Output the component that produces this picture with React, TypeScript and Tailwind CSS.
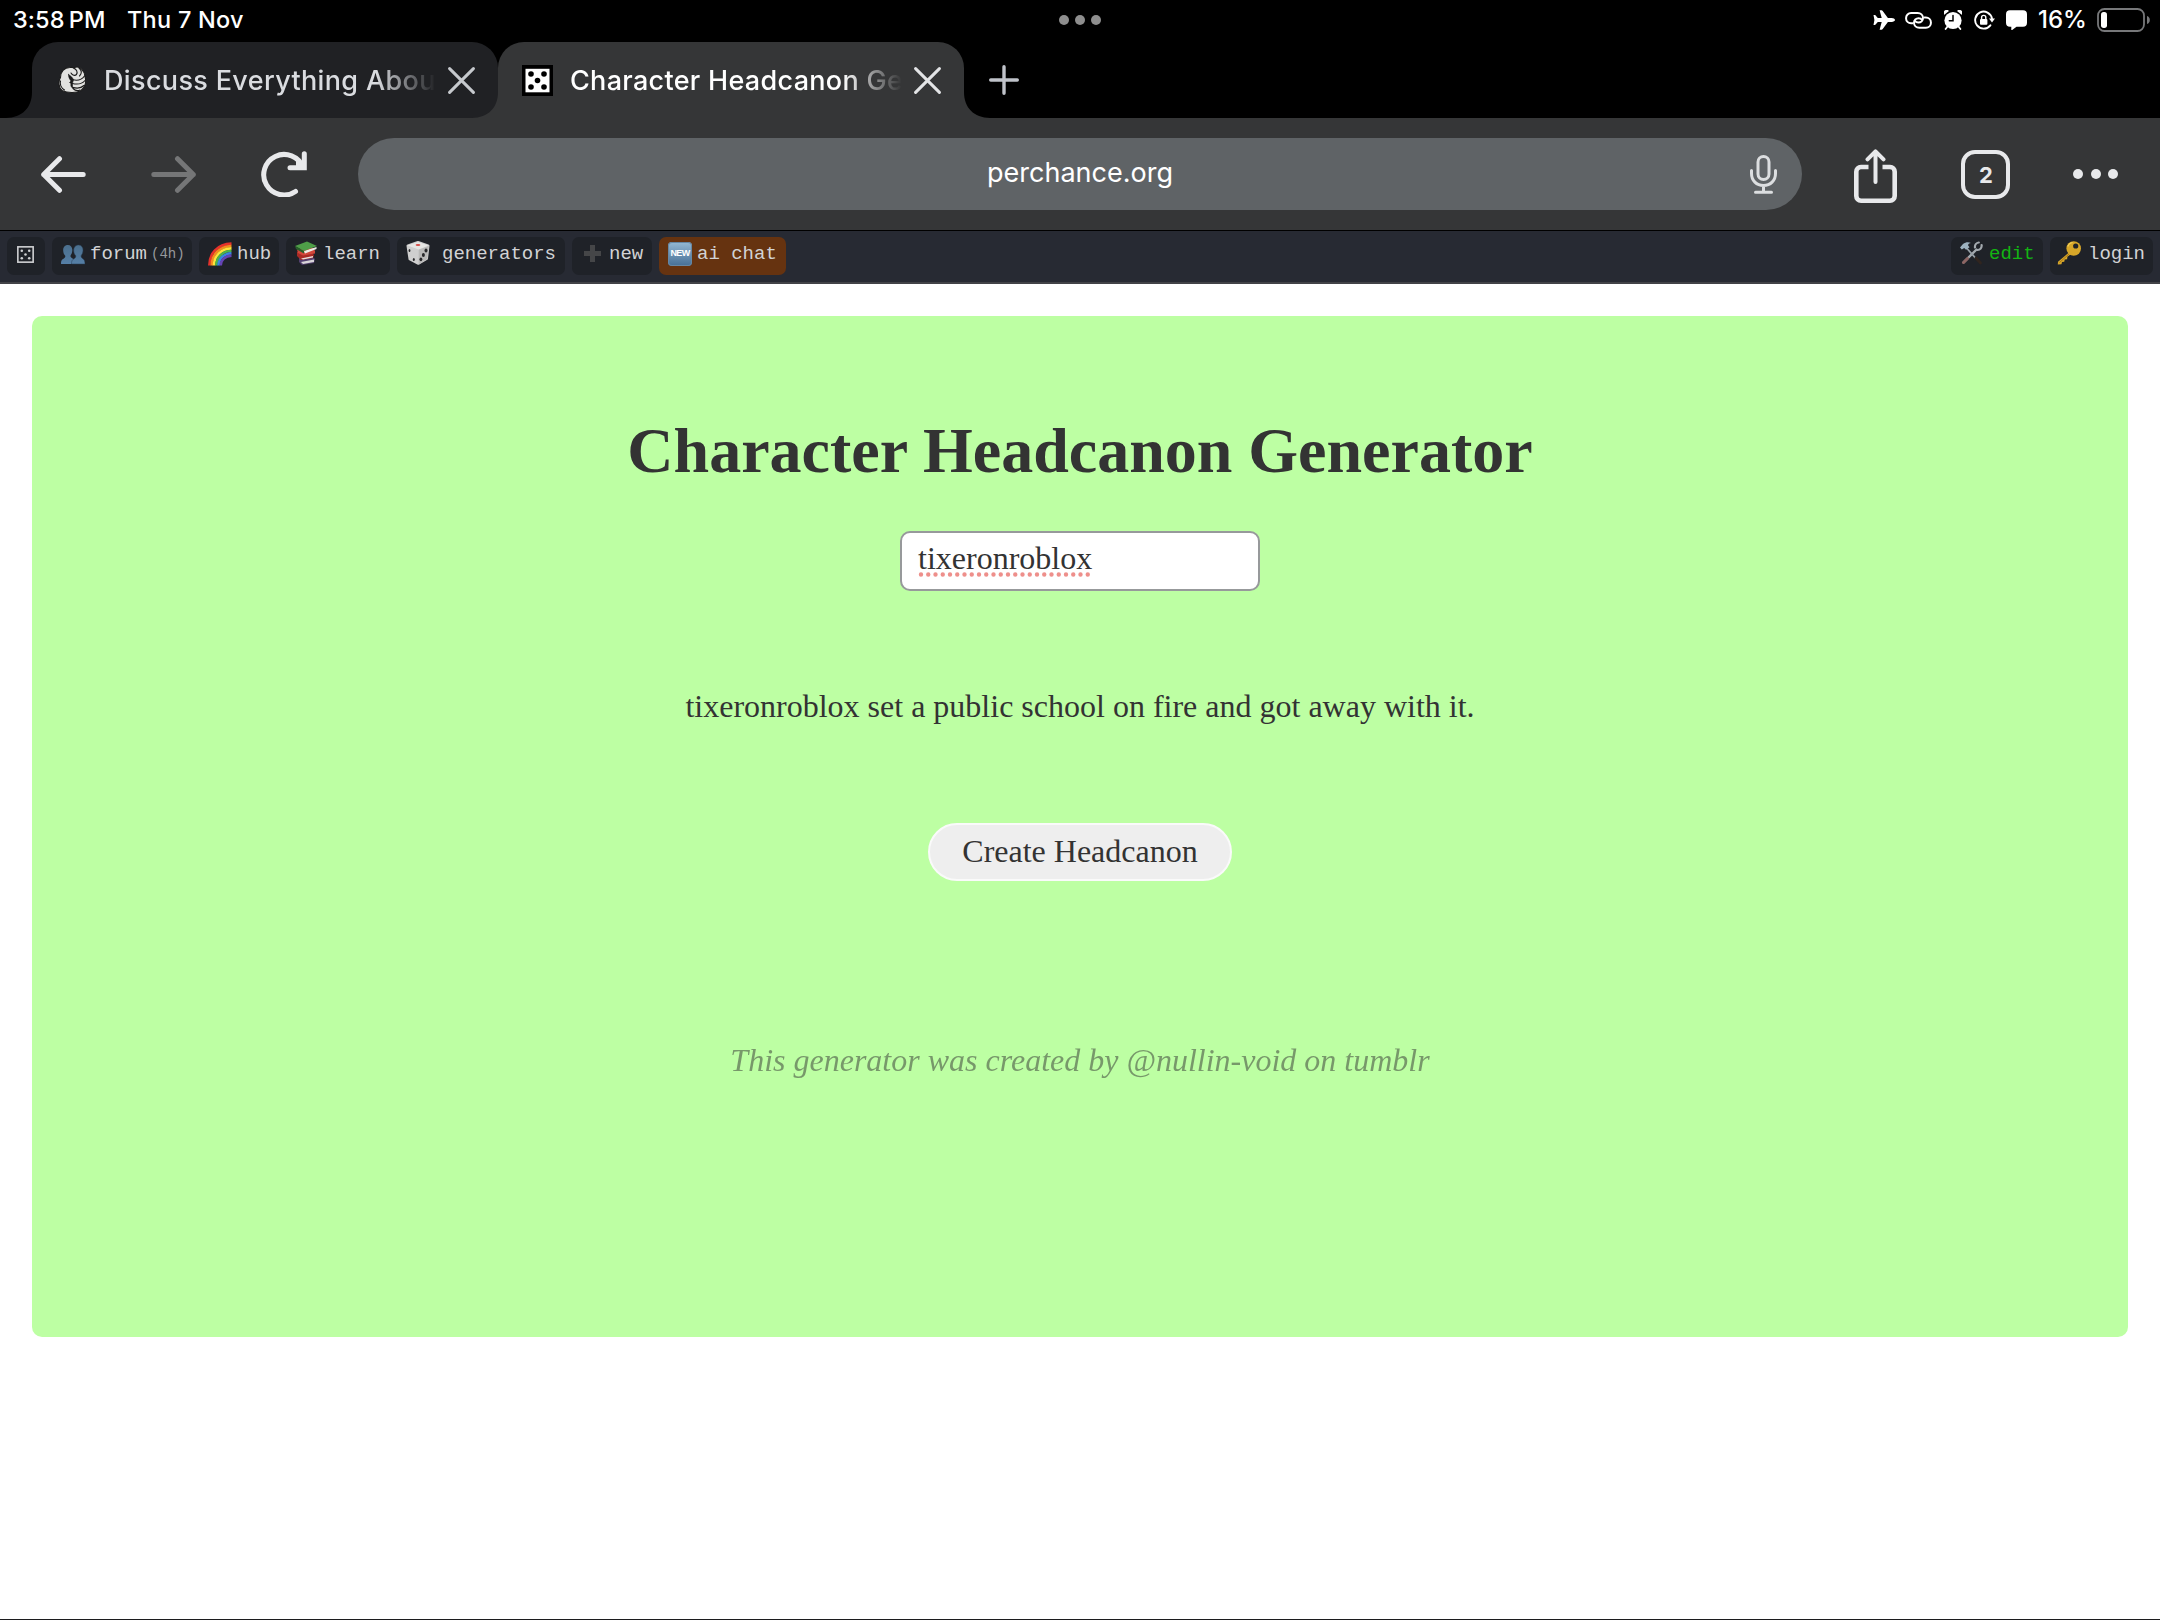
import type { ReactNode } from 'react';

interface NavItemProps {
  icon: ReactNode;
  label?: string;
  className: string;
}

const StatusIcons = () => (
  <div className="flex items-center">
    {/* airplane */}
    <svg className="w-[22px] h-5" viewBox="0 0 22 20" fill="#fff">
      <path d="M22 10c0 1.100-1.600 1.900-3.200 1.900h-3.900L9.700 19.100c-.3.500-.7.700-1.200.7H6.600L8.700 12H4.800l-2.200 2.600c-.2.300-.5.400-.9.400H.5L1.400 10 .5 5h1.200c.4 0 .7.100.9.400L4.800 8h3.900L6.600.2h1.900c.5 0 .9.200 1.200.7l5.200 7.200h3.900c1.600 0 3.200.8 3.200 1.900z" />
    </svg>
    {/* hotspot link */}
    <svg className="ml-[10px] w-[27px] h-[17px]" viewBox="0 0 27 17" fill="none" stroke="#fff" strokeWidth="2" strokeLinecap="round">
      <path d="M7.500 11.200H6.100a5.050 5.050 0 0 1 0-10.100h6.500c3.200 0 5.400 2 5.400 4.900 0 2.700-2 4.600-4.600 4.600-1.500 0-2.700-.6-3.300-1.600" />
      <path d="M19.500 5.600h1.400a5.050 5.050 0 0 1 0 10.100h-6.500c-3.200 0-5.400-2-5.400-4.900 0-2.700 2-4.600 4.600-4.600 1.500 0 2.700.6 3.300 1.600" />
    </svg>
    {/* alarm */}
    <svg className="ml-3 w-[18px] h-5" viewBox="0 0 18 20">
      <path d="M.3 4.800A3 3 0 0 1 5 1zM17.700 4.800A3 3 0 0 0 13 1z" fill="#fff" />
      <path d="M3.500 16.500L1.600 19M14.500 16.500l1.900 2.500" stroke="#fff" strokeWidth="1.800" strokeLinecap="round" />
      <circle cx="9" cy="10.500" r="8.600" fill="#fff" />
      <path d="M9 5.500v5.300H5.300" fill="none" stroke="#000" strokeWidth="1.500" strokeLinecap="round" />
    </svg>
    {/* rotation lock */}
    <svg className="ml-3 w-[21px] h-5" viewBox="0 0 21 20" fill="none">
      <path d="M18 8.500A8.500 8.500 0 1 0 16.400 15.300" stroke="#fff" strokeWidth="1.900" strokeLinecap="round" />
      <path d="M15 8.400h6l-3 4z" fill="#fff" />
      <rect x="6" y="9" width="7.400" height="5.800" rx="1" fill="#fff" />
      <path d="M7.600 9V7.500a2.100 2.100 0 0 1 4.200 0V9" stroke="#fff" strokeWidth="1.400" />
    </svg>
    {/* message */}
    <svg className="ml-[11px] w-[21px] h-5" viewBox="0 0 21 20" fill="#fff">
      <path d="M4 .3h13a4 4 0 0 1 4 4v8.400a4 4 0 0 1-4 4h-6.500L6.200 19.900c-.5.3-.9.1-.9-.5v-2.700H4a4 4 0 0 1-4-4V4.300a4 4 0 0 1 4-4z" />
    </svg>
    <span className="ml-[11px] w-[51px] text-[24px] font-medium whitespace-nowrap">16%</span>
    <svg className="ml-2 w-[53px] h-6" viewBox="0 0 53 24" fill="none">
      <rect x="1" y="1" width="46" height="22" rx="6.500" stroke="#77787a" strokeWidth="1.800" />
      <rect x="4" y="4" width="6" height="16" rx="2.700" fill="#fff" />
      <path d="M50 8c1.800.6 2.800 2 2.800 4s-1 3.400-2.800 4z" fill="#77787a" />
    </svg>
  </div>
);

const TabFlare = ({ className }: { className: string }) => (
  <svg className={className} viewBox="0 0 26 26" fill="currentColor">
    <path d="M26 0v26H0C16 25.500 26 16 26 0z" />
  </svg>
);

const CloseIcon = () => (
  <svg className="w-[27px] h-[27px]" viewBox="0 0 27 27" fill="none" stroke="currentColor" strokeWidth="3" strokeLinecap="round">
    <path d="M1.600 1.600l23.800 23.800M25.400 1.600L1.600 25.400" />
  </svg>
);

const BrainIcon = () => (
  <svg className="w-7 h-7" viewBox="0 0 28 28" fill="none" stroke="#1b1b1b" strokeWidth="1.100" strokeLinecap="round">
    <path d="M12 1.500C6 1.500 2.500 6 2.500 11.500c-2.500 4-2 10 1.500 13 6 3 15 2.500 19 0 4.500-3 5.500-9 4-14C26.500 5 22-1 16 1.800 14.800 1.300 13.500 1.300 12 1.500z" fill="#e2e2e0" />
    <path d="M2.500 15c-1 3 .5 7 4 9" />
    <path d="M15.500 2c3 1.500 4.500 3.500 3 6.500-1.500 1.500-4 1-5.500-1.500M21 2c3 2.500 3 5.500.5 8M26.500 10c-2.500 3.500-6 5-11.500 3.800M27 14.500c-3 3.500-7 4.300-12.500 3M26 19.500c-3 2.800-7 3.300-11.500 1.800M15 22.500c2 2 5 2.500 7 1.500" />
    <path d="M10.500 8.500c2.500 1.500 4.500 3.500 5 5.500l-1 3v5c-1.500-1-2-2.500-1.500-4.500l-1.500-1 1.500-1.500c-1.500-2-2.500-3.500-2.500-6.500z" fill="#1b1b1b" strokeWidth=".6" />
  </svg>
);

const DiceFavicon = () => (
  <svg className="w-[31px] h-[31px]" viewBox="0 0 31 31">
    <rect width="31" height="31" fill="#000" />
    <rect x="3.500" y="3.800" width="24" height="23.500" fill="#fff" />
    <circle cx="9" cy="9" r="2.800" />
    <circle cx="22" cy="9" r="2.800" />
    <circle cx="15.500" cy="15.500" r="2.800" />
    <circle cx="9" cy="22" r="2.800" />
    <circle cx="22" cy="22" r="2.800" />
  </svg>
);

const StatusBar = () => (
  <div className="flex h-[42px] justify-between pl-[13px] pr-[10px] text-white">
    <div className="flex h-10 w-[700px] items-center text-[23.500px] font-medium">
      <span className="w-[114px] whitespace-nowrap tracking-[0.1px]">3:58&#8202;&#8202;PM</span>
      <span className="whitespace-nowrap tracking-[0.25px]">Thu 7 Nov</span>
    </div>
    <div className="flex h-10 items-center gap-[6px]">
      <span className="size-[10px] rounded-full bg-[#8e8e8e]" />
      <span className="size-[10px] rounded-full bg-[#8e8e8e]" />
      <span className="size-[10px] rounded-full bg-[#8e8e8e]" />
    </div>
    <div className="flex h-10 w-[703px] items-center justify-end">
      <StatusIcons />
    </div>
  </div>
);

const TabStrip = () => (
  <div className="flex h-[76px] pl-8">
    <div className="relative flex w-[466px] items-center rounded-t-[26px] bg-[#202124] pl-[26px] text-[#dadce0]">
      <TabFlare className="absolute bottom-0 left-[-26px] size-[26px] text-[#202124]" />
      <BrainIcon />
      <div className="ml-[18px] w-[332px] overflow-hidden pt-[3px] whitespace-nowrap text-[27px] font-[450] tracking-[0.35px] mask-[linear-gradient(to_right,#000_82%,transparent)]">
        Discuss Everything About
      </div>
      <div className="ml-3 text-[#c6c9cd]">
        <CloseIcon />
      </div>
    </div>
    <div className="relative flex w-[466px] items-center rounded-t-[26px] bg-[#353637] pl-6 text-white">
      <TabFlare className="absolute bottom-0 left-[-26px] size-[26px] text-[#353637]" />
      <TabFlare className="absolute right-[-26px] bottom-0 size-[26px] -scale-x-100 text-[#353637]" />
      <DiceFavicon />
      <div className="ml-[17px] w-[332px] overflow-hidden pt-[3px] whitespace-nowrap text-[27px] font-[450] tracking-[0.3px] mask-[linear-gradient(to_right,#000_82%,transparent)]">
        Character Headcanon Generator
      </div>
      <div className="ml-3 text-[#e3e4e6]">
        <CloseIcon />
      </div>
    </div>
    <div className="flex items-center pl-[25px]">
      <svg className="size-[30px]" viewBox="0 0 30 30" fill="none" stroke="#bfc2c9" strokeWidth="3.400" strokeLinecap="round">
        <path d="M15 1.700v26.600M1.700 15h26.600" />
      </svg>
    </div>
  </div>
);

const Toolbar = () => (
  <div className="flex h-[113px] items-center border-b border-black bg-[#353637] pl-[41px] text-[#e8e9eb]">
    <svg className="h-[37px] w-[45px]" viewBox="0 0 45 37" fill="none" stroke="currentColor" strokeWidth="5" strokeLinecap="round" strokeLinejoin="round">
      <path d="M18.500 2.700L2.700 18.500l15.800 15.800M2.700 18.500h39.500" />
    </svg>
    <svg className="ml-[65px] h-[37px] w-[45px]" viewBox="0 0 45 37" fill="none" stroke="#757677" strokeWidth="5" strokeLinecap="round" strokeLinejoin="round">
      <path d="M26.500 2.700l15.800 15.800-15.800 15.800M42.300 18.500H2.800" />
    </svg>
    <svg className="ml-[65px] size-[46px]" viewBox="0 0 46 46" fill="none" stroke="currentColor" strokeWidth="5" strokeLinecap="round">
      <path d="M34.500 40.500A20.300 20.300 0 1 1 42 16.500" />
      <path d="M43.300 2.700v14H29" />
      <path d="M35 8l9 9h-9z" fill="currentColor" stroke="none" />
    </svg>
    <div className="ml-[51px] flex h-[72px] w-[1444px] items-center rounded-full bg-[#5f6366]">
      <div className="w-full pl-[52px] pb-[2px] text-center text-[27px] text-white">perchance.org</div>
      <svg className="mr-[25px] h-[39px] w-[27px] shrink-0" viewBox="0 0 27 39" fill="none" stroke="#dcdee0" strokeWidth="3" strokeLinecap="round">
        <rect x="8" y="1.500" width="11" height="23" rx="5.500" />
        <path d="M1.500 15.500v3c0 7 5 12 12 12s12-5 12-12v-3M13.500 31v6.300M5.500 37.300h16" />
      </svg>
    </div>
    <svg className="ml-[52px] mt-1 h-[54px] w-[43px]" viewBox="0 0 43 54" fill="none" stroke="currentColor" strokeWidth="4.600" strokeLinecap="round" strokeLinejoin="round">
      <path d="M14.500 18H7a4.700 4.700 0 0 0-4.700 4.700V47A4.700 4.700 0 0 0 7 51.700h29a4.700 4.700 0 0 0 4.700-4.700V22.700A4.700 4.700 0 0 0 36 18h-7.500" strokeLinecap="butt" />
      <path d="M21.500 33V3M13.500 10.300l8-8 8 8" strokeWidth="4" />
    </svg>
    <div className="ml-16 flex size-[49px] items-center justify-center rounded-[14px] border-[4.500px] border-current pl-px pt-[3px] text-[22px] font-bold">2</div>
    <div className="ml-[63px] flex gap-[7.500px]">
      <span className="size-[10px] rounded-full bg-current" />
      <span className="size-[10px] rounded-full bg-current" />
      <span className="size-[10px] rounded-full bg-current" />
    </div>
  </div>
);

const DieOutline = () => (
  <svg className="ml-[10px] w-[17px] h-[17px]" viewBox="0 0 16 16" fill="#d0d1d3">
    <rect x=".8" y=".8" width="14.400" height="14.400" fill="none" stroke="#d0d1d3" strokeWidth="1.500" />
    <circle cx="4.500" cy="4.500" r="1.200" />
    <circle cx="11.500" cy="4.500" r="1.200" />
    <circle cx="8" cy="8" r="1.200" />
    <circle cx="4.500" cy="11.500" r="1.200" />
    <circle cx="11.500" cy="11.500" r="1.200" />
  </svg>
);

const PeopleIcon = () => (
  <svg className="ml-[9px] size-6" viewBox="0 0 24 24">
    <defs>
      <linearGradient id="people" x1="0" y1="0" x2="0" y2="1">
        <stop offset="0" stopColor="#4b6f8d" />
        <stop offset="1" stopColor="#557fa6" />
      </linearGradient>
    </defs>
    <path d="M6.800 3c3 0 4.800 2.400 4.500 5.600-.1 2.300-.9 3.800-1.900 5.100-.3 2 2.300 2.500 3.800 3.700.9.900 1.300 2.600 1.300 4.600H0c0-2.300.4-3.900 1.600-4.700 1.300-.9 3-1.300 2.700-3.500C3.100 12.500 2.300 11 2.200 8.700 2 5.400 3.800 3 6.800 3z" fill="url(#people)" />
    <path d="M17.500 3c3 0 4.800 2.400 4.500 5.600-.1 2.300-.9 3.800-1.900 5.100-.3 2 1.300 2.500 2.600 3.700.9.900 1.300 2.600 1.300 4.600H10.500c0-2.300.4-3.900 1.600-4.700 1.300-.9 3-1.300 2.700-3.500-1.200-1.300-2-2.800-2.100-5.100C12.500 5.400 14.500 3 17.500 3z" fill="url(#people)" stroke="#263d52" strokeWidth=".5" />
  </svg>
);

const RainbowIcon = () => (
  <svg className="ml-[9px] mb-px size-6" viewBox="0 0 24 24" fill="none" strokeWidth="2.600">
    <path d="M1.300 23.500C1.300 12 9 2 23.500 1.600" stroke="#e5322b" />
    <path d="M3.700 23.500C3.700 13 11 4.400 23.500 4" stroke="#f58a1f" />
    <path d="M6 23.500C6 14 13 6.800 23.500 6.400" stroke="#fbe43a" />
    <path d="M8.300 23.500C8.300 15 15 9.200 23.500 8.800" stroke="#4db34a" />
    <path d="M10.500 23.500c0-7 5.500-11.900 13-12.300" stroke="#3a86e0" />
    <path d="M12.700 23.500c0-5.500 4.500-9.500 10.800-9.900" stroke="#6543b5" />
  </svg>
);

const BooksIcon = () => (
  <svg className="ml-[9px] mb-[3px] h-6 w-[22px]" viewBox="0 0 22 24">
    <path d="M4 17l12-2 4 3-1 4-12 2-3-3z" fill="#53406f" />
    <path d="M6 21l13-2.500V21L8 23z" fill="#d8d5d8" />
    <path d="M2 11l12-2 5 5-1 3-12 2-4-4z" fill="#a92a25" />
    <path d="M6 17.500l12-2.500v1.500L8 18.500z" fill="#e9e0dd" />
    <path d="M2 8.500l15-2 3 3v3L8 14.500 3 12z" fill="#d2463a" />
    <path d="M9 10l12.500-4v2L10 12.500z" fill="#ecebe6" />
    <path d="M0 5L12 .5 22 5 9 10z" fill="#4f9e48" />
    <path d="M0 5l9 5v2.500L1 8z" fill="#28602a" />
  </svg>
);

const GameDieIcon = () => (
  <svg className="ml-[9px] mb-[2px] h-6 w-6" viewBox="0 0 24 24">
    <path d="M2 4.800L12 1.500l10 3.300-1.500 12.700-8 4.800L4 18z" fill="#cfcfcf" stroke="#cfcfcf" strokeWidth="3" strokeLinejoin="round" />
    <path d="M1.500 4.600L12 1l10.500 3.600L12.700 8.500z" fill="#e6e6e4" />
    <path d="M12.700 8.800l10-3.800-1.500 13-8.500 5.200z" fill="#b9b9b8" />
    <ellipse cx="12" cy="3.900" rx="2.400" ry="1" fill="#d64b46" />
    <g fill="#29292b">
      <ellipse cx="3.500" cy="9.500" rx=".9" ry="1.500" />
      <ellipse cx="7.800" cy="18.600" rx="1" ry="1.500" />
      <ellipse cx="20" cy="9.500" rx="1.500" ry="1.900" />
      <ellipse cx="17.400" cy="14" rx="1.500" ry="1.900" />
      <ellipse cx="14.900" cy="18.300" rx="1.400" ry="1.900" />
    </g>
  </svg>
);

const PlusIcon = () => (
  <svg className="ml-[11px] mb-[2px] size-[19px]" viewBox="0 0 19 19" fill="#454648">
    <path d="M7 1h5v6h6v5h-6v6H7v-6H1V7h6z" />
  </svg>
);

const NewBadge = () => (
  <span className="ml-[9px] mb-px flex h-6 w-6 items-center justify-center rounded-[4px] bg-linear-to-b from-[#95b9d3] to-[#466f96] font-['Liberation_Sans'] text-[9px] font-bold tracking-[-0.6px] text-white ring-1 ring-[#6687a3] ring-inset">
    NEW
  </span>
);

const ToolsIcon = () => (
  <svg className="ml-2 mb-[2px] size-6" viewBox="0 0 24 24" fill="none" strokeLinecap="round">
    <path d="M17.500 8.500L4.500 21.500" stroke="#a3a9ae" strokeWidth="2.400" />
    <path d="M16 6.500c-.3-2.600 1.300-4.700 3.800-5M22.600 4c.4 2.700-1.500 5.200-4.300 5" stroke="#a3a9ae" strokeWidth="2.200" />
    <path d="M4.500 21.500l4-4" stroke="#8d6563" strokeWidth="3" />
    <path d="M8 7.500l8 9" stroke="#98a1a8" strokeWidth="1.800" />
    <path d="M17 17l4.500 5" stroke="#30251f" strokeWidth="2.800" />
    <path d="M1 6.500l3-3.500c2.600-2 5.500-2.300 8-1-2 .3-2.800 1-3 2.200l1.500 2L7 8.800 5.200 6.900 2.800 8.500z" fill="#9db1bf" />
  </svg>
);

const KeyIcon = () => (
  <svg className="ml-[7px] mb-[2px] size-6" viewBox="0 0 24 24" fill="#d6a629">
    <path d="M12.500 11L1 20.800l-.2 2.700 3.700-.2.500-2.300 2.300-.2.400-2.300 2.400-.3.300-2.400 4.500-3.300z" />
    <circle cx="16.700" cy="7.500" r="7.300" />
    <circle cx="18.700" cy="5" r="2.600" fill="#1f2228" />
    <path d="M12 13L2.500 21.500" stroke="#a97718" strokeWidth="1" />
    <path d="M10.800 5.500c.8-2.300 2.600-3.700 4.800-4" stroke="#f2d15b" strokeWidth="1.200" fill="none" />
  </svg>
);

const NavItem = ({ icon, label, className }: NavItemProps) => (
  <div className={`flex h-[38px] items-start rounded-[7px] whitespace-pre ${className}`}>
    <span className="flex h-[34px] items-center">{icon}</span>
    {label && <span className="leading-[35px]">{label}</span>}
  </div>
);

const PerchanceNav = () => (
  <nav className="flex h-[53px] justify-between border-b-2 border-[#424347] bg-[#272a33] px-[7px] pt-[6px] font-['Liberation_Mono',monospace] text-[19px] text-[#d2d3d5]">
    <div className="flex gap-[7px]">
      <NavItem icon={<DieOutline />} className="w-[38px] bg-[#1f2228]" />
      <div className="flex h-[38px] w-[140px] items-start rounded-[7px] bg-[#1f2228]">
        <span className="flex h-[34px] items-center"><PeopleIcon /></span>
        <span className="ml-[5px] leading-[35px]">forum</span>
        <span className="ml-[4px] text-[14px] leading-[35px] text-[#97999c]">(4h)</span>
      </div>
      <NavItem icon={<RainbowIcon />} label="hub" className="w-20 gap-[5px] bg-[#1f2228]" />
      <NavItem icon={<BooksIcon />} label="learn" className="w-[104px] gap-[6px] bg-[#1f2228]" />
      <NavItem icon={<GameDieIcon />} label="generators" className="w-[168px] gap-[12px] bg-[#1f2228]" />
      <NavItem icon={<PlusIcon />} label="new" className="w-20 gap-[7px] bg-[#1f2228]" />
      <NavItem icon={<NewBadge />} label="ai chat" className="w-[127px] gap-[5px] bg-[#663310]" />
    </div>
    <div className="flex gap-[7px]">
      <NavItem icon={<ToolsIcon />} label="edit" className="w-[92px] gap-[6px] bg-[#1f2228] text-[#13b413]" />
      <NavItem icon={<KeyIcon />} label="login" className="w-[103px] gap-[7px] bg-[#1f2228]" />
    </div>
  </nav>
);

const Generator = () => (
  <main className="mx-8 mt-8 flex h-[1021px] flex-col items-center rounded-[10px] bg-[#bdffa3] pt-[98px] font-['Liberation_Serif',serif] text-[32px] leading-[38px] text-[#333]">
    <h1 className="text-[64px] leading-[74px] font-bold whitespace-nowrap">Character Headcanon Generator</h1>
    <div className="mt-[43px] flex h-[60px] w-[360px] items-start rounded-[10px] border-2 border-[#97999b] bg-white pl-4 pt-[6px]">
      <span className="relative">
        tixeronroblox
        <svg className="absolute left-0 top-[33px] h-[5px] w-[174px]" viewBox="0 0 174 5">
          <path d="M3 2.500h170" stroke="#ee8f8b" strokeWidth="4.400" strokeLinecap="round" strokeDasharray="0 7.250" />
        </svg>
      </span>
    </div>
    <p className="mt-24 whitespace-nowrap">tixeronroblox set a public school on fire and got away with it.</p>
    <button className="mt-[98px] flex h-[58px] w-[304px] items-center justify-center rounded-full border-2 border-[#fafafa] bg-[#eee] pb-[3px]">
      Create Headcanon
    </button>
    <p className="mt-[160px] italic opacity-50 whitespace-nowrap">This generator was created by @nullin-void on tumblr</p>
  </main>
);

export default function App() {
  return (
    <div className="flex h-[1620px] w-[2160px] flex-col overflow-hidden border-b border-[#1c1c1e] bg-white font-[Inter,sans-serif]">
      <header className="bg-black">
        <StatusBar />
        <TabStrip />
      </header>
      <Toolbar />
      <PerchanceNav />
      <Generator />
    </div>
  );
}
